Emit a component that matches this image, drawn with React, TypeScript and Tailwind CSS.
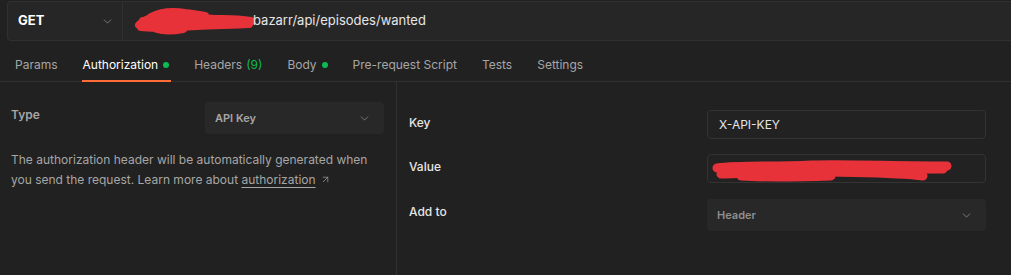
import { ChevronDown, ArrowUpRight } from "lucide-react";

const tabs = [
  { label: "Params" },
  { label: "Authorization", dot: true, active: true },
  { label: "Headers", count: "(9)" },
  { label: "Body", dot: true },
  { label: "Pre-request Script" },
  { label: "Tests" },
  { label: "Settings" },
];

function Scribble({ w, h, paths, sw }: { w: number; h: number; paths: string[]; sw: number }) {
  return (
    <svg width={w} height={h} viewBox={`0 0 ${w} ${h}`} className="block">
      {paths.map((d, i) => (
        <path key={i} d={d} fill="none" stroke="#e8323a" strokeWidth={sw} strokeLinecap="round" strokeLinejoin="round" />
      ))}
    </svg>
  );
}

export default function App() {
  return (
    <div
      className="w-[1011px] h-[275px] overflow-hidden bg-[#212121] text-[#a6a6a6] flex flex-col"
      style={{ fontFamily: "Inter, 'Noto Sans', sans-serif" }}
    >
      {/* url bar */}
      <div className="pl-[7px] pt-px">
        <div className="h-[40px] flex rounded-l-[4px] border border-r-0 border-[#303030] bg-[#262626]">
          <div className="w-[115px] flex items-center justify-between pl-[10px] pr-[8px] border-r border-[#303030]">
            <span className="text-[13px] font-bold text-white">GET</span>
            <ChevronDown size={13} strokeWidth={1.5} className="text-[#8a8a8a]" />
          </div>
          <div className="flex items-center pl-[10px]">
            <Scribble
              w={124}
              h={28}
              sw={8}
              paths={[
                "M6 18 C14 10 26 8 40 9 C56 10 70 12 90 12 C104 12 112 13 118 14",
                "M8 20 C24 22 44 20 64 19 C84 18 100 18 116 17",
                "M18 10 C28 5 40 4 52 6 C60 7 66 8 72 9",
                "M10 14 L114 15",
                "M24 22 C30 24 40 24 50 22",
              ]}
            />
            <span className="text-[13px] text-[#e6e6e6] -ml-[4px]">bazarr/api/episodes/wanted</span>
          </div>
        </div>
      </div>

      {/* tabs */}
      <div className="mt-[8px] h-[33px] flex items-stretch pl-[15px] gap-[25px] border-b border-[#303030]">
        {tabs.map((t) => (
          <div
            key={t.label}
            className={
              "flex items-center text-[12px] relative " + (t.active ? "text-white" : "text-[#a6a6a6]")
            }
          >
            <span>{t.label}</span>
            {t.count && <span className="ml-[4px] text-[#0cbb52]">{t.count}</span>}
            {t.dot && <span className="ml-[5px] w-[6px] h-[6px] rounded-full bg-[#0cbb52]" />}
            {t.active && <span className="absolute left-[-1px] right-[-2px] bottom-[-1px] h-[2px] bg-[#ff6c37]" />}
          </div>
        ))}
      </div>

      {/* body */}
      <div className="flex flex-1">
        <div className="w-[397px] border-r border-[#303030] pl-[11px] pr-[12px] pt-[20px]">
          <div className="flex justify-between">
            <span className="text-[12px] font-semibold text-[#a6a6a6] mt-[4px]">Type</span>
            <div className="w-[179px] h-[32px] rounded-[4px] bg-[#282828] flex items-center justify-between pl-[10px] pr-[13px]">
              <span className="text-[11px] font-semibold text-[#a6a6a6]">API Key</span>
              <ChevronDown size={13} strokeWidth={1.5} className="text-[#8a8a8a]" />
            </div>
          </div>
          <p className="mt-[16px] text-[12px] leading-[20px] text-[#a6a6a6]">
            The authorization header will be automatically generated when you send the request. Learn more about{" "}
            <span className="underline underline-offset-[3px] decoration-[#a6a6a6]">authorization</span>
            <ArrowUpRight size={11} strokeWidth={1.5} className="inline ml-[4px] -mt-[2px]" />
          </p>
        </div>

        <div className="flex-1 pl-[12px] pr-[25px] pt-[28px] flex flex-col gap-[15px]">
          <div className="flex items-start justify-between">
            <span className="text-[12px] font-medium text-[#e6e6e6] mt-[4px]">Key</span>
            <div className="w-[279px] h-[29px] rounded-[4px] border border-[#333333] bg-[#222222] flex items-center pl-[11px]">
              <span className="text-[12px] text-[#e6e6e6]">X-API-KEY</span>
            </div>
          </div>
          <div className="flex items-start justify-between">
            <span className="text-[12px] font-medium text-[#e6e6e6] mt-[4px]">Value</span>
            <div className="w-[279px] h-[29px] rounded-[4px] border border-[#333333] bg-[#222222] flex items-center pl-[3px]">
              <Scribble
                w={242}
                h={26}
                sw={9}
                paths={[
                  "M6 12 C30 9 60 11 100 9 C140 8 180 10 236 10",
                  "M10 18 C40 17 80 15 120 16 C160 17 190 17 212 20",
                  "M12 14 L232 13",
                  "M30 20 C60 22 90 21 120 20",
                ]}
              />
            </div>
          </div>
          <div className="flex items-start justify-between mt-[1px]">
            <span className="text-[12px] font-medium text-[#e6e6e6] mt-[4px]">Add to</span>
            <div className="w-[279px] h-[32px] rounded-[4px] bg-[#282828] flex items-center justify-between pl-[10px] pr-[13px]">
              <span className="text-[11px] font-semibold text-[#8f8f8f]">Header</span>
              <ChevronDown size={13} strokeWidth={1.5} className="text-[#8a8a8a]" />
            </div>
          </div>
        </div>
      </div>
    </div>
  );
}
